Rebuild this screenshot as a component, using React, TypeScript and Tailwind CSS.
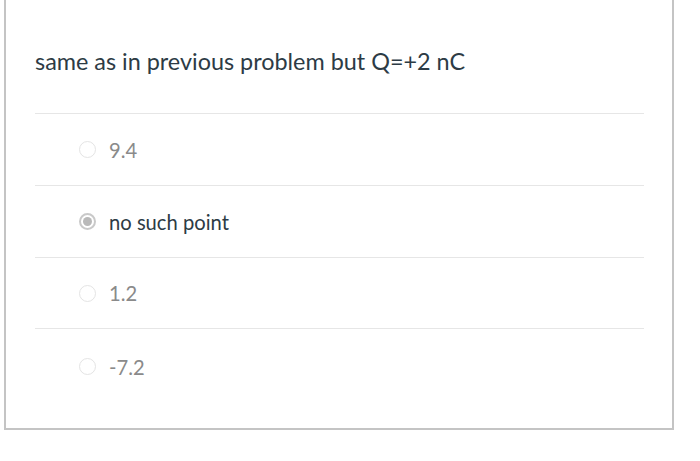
const options = [
  { label: '9.4', selected: false },
  { label: 'no such point', selected: true },
  { label: '1.2', selected: false },
  { label: '-7.2', selected: false },
];

function Radio({ selected }: { selected: boolean }) {
  if (selected) {
    return (
      <span className="flex h-[17px] w-[17px] items-center justify-center rounded-full border-2 border-[#c9c9c9] bg-white">
        <span className="h-[9px] w-[9px] rounded-full bg-[#b9b9b9]" />
      </span>
    );
  }
  return <span className="h-[17px] w-[17px] rounded-full border border-[#e4e4e4] bg-white" />;
}

export default function App() {
  return (
    <div className="h-[461px] w-[700px] bg-white font-['Lato','Liberation_Sans',sans-serif]">
      <div className="ml-[4px] h-[430px] w-[670px] border-x-2 border-b-2 border-[#c4c4c4] px-[29px]">
        <div className="pt-[44px] pb-[35px] text-[23.4px] leading-[34px] text-[#2d3b45]">
          same as in previous problem but Q=+2 nC
        </div>
        <div className="w-[609px]">
          {options.map((o, i) => (
            <div
              key={o.label}
              className={`flex items-center gap-[13px] border-t border-[#e6e6e6] pl-[44px] ${
                i === 3 ? 'h-[76px]' : i === 2 ? 'h-[71px]' : 'h-[72px]'
              }`}
            >
              <Radio selected={o.selected} />
              <span
                className={`pt-[1px] text-[20.2px] ${o.selected ? 'text-[#2d3b45]' : 'text-[#8a8a8a]'}`}
              >
                {o.label}
              </span>
            </div>
          ))}
        </div>
      </div>
    </div>
  );
}
